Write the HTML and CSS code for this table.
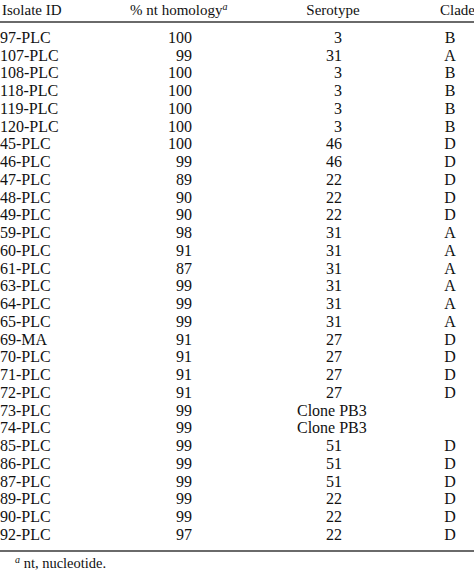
FILE: index.html
```html
<!DOCTYPE html>
<html lang="en">
<head>
<meta charset="utf-8">
<title>Isolates</title>
<link rel="stylesheet" href="styles.css">
</head>
<body>
<div class="page">
<table class="data">
<colgroup><col class="c1"><col class="c2"><col class="c3"><col class="c4"></colgroup>
<thead>
<tr><th class="h-id">Isolate ID</th><th class="h-hom">% nt homology<sup class="fn">a</sup></th><th class="h-sero">Serotype</th><th class="h-clade">Clade</th></tr>
</thead>
<tbody>
<tr><td>97-PLC</td><td class="num">100</td><td class="sero">3</td><td class="clade">B</td></tr>
<tr><td>107-PLC</td><td class="num">99</td><td class="sero">31</td><td class="clade">A</td></tr>
<tr><td>108-PLC</td><td class="num">100</td><td class="sero">3</td><td class="clade">B</td></tr>
<tr><td>118-PLC</td><td class="num">100</td><td class="sero">3</td><td class="clade">B</td></tr>
<tr><td>119-PLC</td><td class="num">100</td><td class="sero">3</td><td class="clade">B</td></tr>
<tr><td>120-PLC</td><td class="num">100</td><td class="sero">3</td><td class="clade">B</td></tr>
<tr><td>45-PLC</td><td class="num">100</td><td class="sero">46</td><td class="clade">D</td></tr>
<tr><td>46-PLC</td><td class="num">99</td><td class="sero">46</td><td class="clade">D</td></tr>
<tr><td>47-PLC</td><td class="num">89</td><td class="sero">22</td><td class="clade">D</td></tr>
<tr><td>48-PLC</td><td class="num">90</td><td class="sero">22</td><td class="clade">D</td></tr>
<tr><td>49-PLC</td><td class="num">90</td><td class="sero">22</td><td class="clade">D</td></tr>
<tr><td>59-PLC</td><td class="num">98</td><td class="sero">31</td><td class="clade">A</td></tr>
<tr><td>60-PLC</td><td class="num">91</td><td class="sero">31</td><td class="clade">A</td></tr>
<tr><td>61-PLC</td><td class="num">87</td><td class="sero">31</td><td class="clade">A</td></tr>
<tr><td>63-PLC</td><td class="num">99</td><td class="sero">31</td><td class="clade">A</td></tr>
<tr><td>64-PLC</td><td class="num">99</td><td class="sero">31</td><td class="clade">A</td></tr>
<tr><td>65-PLC</td><td class="num">99</td><td class="sero">31</td><td class="clade">A</td></tr>
<tr><td>69-MA</td><td class="num">91</td><td class="sero">27</td><td class="clade">D</td></tr>
<tr><td>70-PLC</td><td class="num">91</td><td class="sero">27</td><td class="clade">D</td></tr>
<tr><td>71-PLC</td><td class="num">91</td><td class="sero">27</td><td class="clade">D</td></tr>
<tr><td>72-PLC</td><td class="num">91</td><td class="sero">27</td><td class="clade">D</td></tr>
<tr><td>73-PLC</td><td class="num">99</td><td class="sero clone">Clone PB3</td><td class="clade"></td></tr>
<tr><td>74-PLC</td><td class="num">99</td><td class="sero clone">Clone PB3</td><td class="clade"></td></tr>
<tr><td>85-PLC</td><td class="num">99</td><td class="sero">51</td><td class="clade">D</td></tr>
<tr><td>86-PLC</td><td class="num">99</td><td class="sero">51</td><td class="clade">D</td></tr>
<tr><td>87-PLC</td><td class="num">99</td><td class="sero">51</td><td class="clade">D</td></tr>
<tr><td>89-PLC</td><td class="num">99</td><td class="sero">22</td><td class="clade">D</td></tr>
<tr><td>90-PLC</td><td class="num">99</td><td class="sero">22</td><td class="clade">D</td></tr>
<tr><td>92-PLC</td><td class="num">97</td><td class="sero">22</td><td class="clade">D</td></tr>
</tbody>
</table>
<p class="footnote"><sup class="fn">a</sup> nt, nucleotide.</p>
</div>
</body>
</html>
```

FILE: styles.css
```css
html, body {
  margin: 0;
  padding: 0;
  background: #ffffff;
  overflow: hidden;
}

.page {
  width: 474px;
  overflow: hidden;
  font-family: "Liberation Serif", "Times New Roman", serif;
  color: #111111;
}

.data {
  border-collapse: collapse;
  table-layout: fixed;
  width: 490px;
}

.c1 { width: 120px; }
.c2 { width: 120px; }
.c3 { width: 186px; }
.c4 { width: 64px; }

.data th {
  font-size: 15px;
  font-weight: normal;
  line-height: 18px;
  padding: 1px 0 2px 0;
  white-space: nowrap;
  border-bottom: 2px solid #6a6a6a;
  text-align: center;
}

.data th.h-id {
  text-align: left;
  padding-left: 2px;
}

.data th.h-hom {
  text-align: left;
  padding-left: 10px;
}

.data th.h-clade {
  text-align: left;
  padding-left: 14px;
}

.fn {
  font-style: italic;
  font-size: 10px;
  line-height: 0;
  vertical-align: 5px;
}

.data td {
  font-size: 16px;
  line-height: 17.75px;
  padding: 0;
  white-space: nowrap;
  text-align: left;
}

.data tbody tr:first-child td {
  padding-top: 5.75px;
}

.data tbody tr:last-child td {
  padding-bottom: 6px;
  border-bottom: 2px solid #6a6a6a;
}

.data td.num {
  text-align: right;
  padding-right: 48px;
}

.data td.sero {
  text-align: right;
  padding-right: 84px;
}

.data td.sero.clone {
  text-align: left;
  padding-left: 57px;
  padding-right: 0;
}

.data td.clade {
  text-align: center;
  padding-left: 12px;
  padding-right: 28px;
}

.footnote {
  margin: 3px 0 0 0;
  padding-left: 15px;
  font-size: 14.5px;
  line-height: 16px;
}

.footnote .fn {
  font-size: 10px;
  vertical-align: 5px;
}
```
